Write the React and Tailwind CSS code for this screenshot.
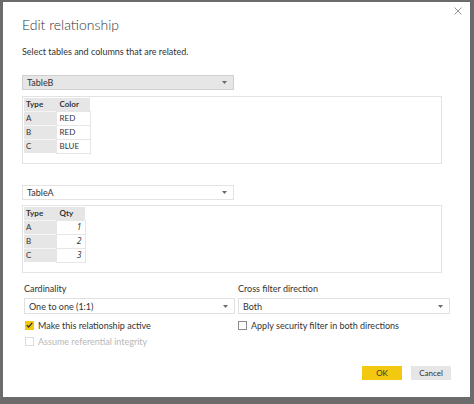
import React from "react";

const font = { fontFamily: 'Lato, "Open Sans", sans-serif' };

const Caret = () => (
    <svg width="5" height="3" viewBox="0 0 5 3" className="shrink-0">
        <path d="M0 0 L5 0 L2.5 3 Z" fill="#6a6a6a" />
    </svg>
);

const Dropdown = ({ label, className }) => (
    <div className={"flex items-center justify-between border pl-[4px] pr-[6px] text-[9px] text-[#333] " + className}>
        <span className="leading-none">{label}</span>
        <Caret />
    </div>
);

const Preview = ({ second, rows }) => (
    <div className="w-[420px] h-[68px] border border-[#e3e3e3] pl-px pt-px">
        <table className="border-collapse text-[8px] text-[#333]">
            <thead>
                <tr className="h-[13px]">
                    <th className="w-[32px] bg-[#e6e6e6] border-r border-[#e6e6e6] text-left font-bold pl-[2px]">Type</th>
                    <th className={"bg-[#e6e6e6] text-left font-bold pl-[3px] " + (second === "Qty" ? "w-[29px]" : "w-[34px]")}>{second}</th>
                </tr>
            </thead>
            <tbody>
                {rows.map((r) => (
                    <tr key={r[0]} className="h-[14px]">
                        <td className="bg-[#e6e6e6] border-t border-[#f5f5f5] pl-[2px]">{r[0]}</td>
                        <td className={"bg-white border border-[#e6e6e6] " + (second === "Qty" ? "text-right italic text-[8.5px] font-['Open_Sans'] pr-[3px]" : "pl-[3px]")}>{r[1]}</td>
                    </tr>
                ))}
            </tbody>
        </table>
    </div>
);

const Check = ({ checked, disabled, label }) => (
    <div className="flex items-center gap-[4px] h-[10px]">
        {checked ? (
            <div className="w-[9px] h-[9px] bg-[#f2c811] flex items-center justify-center">
                <svg width="7" height="6" viewBox="0 0 7 6">
                    <path d="M0.8 3.2 L2.7 5 L6.2 0.8" stroke="#333" strokeWidth="1.3" fill="none" />
                </svg>
            </div>
        ) : (
            <div className={"w-[9px] h-[9px] border " + (disabled ? "border-[#dcdcdc]" : "border-[#8a8a8a]")} />
        )}
        <span className={"text-[9px] leading-none " + (disabled ? "text-[#b8b8b8]" : "text-[#333]")}>{label}</span>
    </div>
);

export default function App() {
    return (
        <div className="w-[474px] h-[404px] bg-[#6b6b6b] pt-[2px] pl-[3px] pr-[4px] pb-[7px]" style={font}>
            <div className="relative h-full bg-white pl-[19px]">
                <button className="absolute top-[5px] right-[8px]">
                    <svg width="8" height="8" viewBox="0 0 8 8">
                        <path d="M0.5 0.5 L7.5 7.5 M7.5 0.5 L0.5 7.5" stroke="#8a8a8a" strokeWidth="0.9" />
                    </svg>
                </button>

                <h1 className="pt-[13px] text-[14px] leading-[20px] font-light text-[#333]">Edit relationship</h1>
                <p className="mt-[11px] text-[9px] leading-[12px] text-[#333]">Select tables and columns that are related.</p>

                <Dropdown label="TableB" className="mt-[17px] w-[212px] h-[15px] bg-[#e6e6e6] border-[#cfcfcf]" />
                <div className="mt-[6px]">
                    <Preview second="Color" rows={[["A", "RED"], ["B", "RED"], ["C", "BLUE"]]} />
                </div>

                <Dropdown label="TableA" className="mt-[21px] w-[212px] h-[15px] bg-white border-[#e3e3e3]" />
                <div className="mt-[5px]">
                    <Preview second="Qty" rows={[["A", "1"], ["B", "2"], ["C", "3"]]} />
                </div>

                <div className="flex gap-[3px] mt-[10px] ml-[2px]">
                    <div className="w-[211px]">
                        <div className="text-[9px] leading-[12px] text-[#333]">Cardinality</div>
                        <Dropdown label="One to one (1:1)" className="mt-[3px] w-[211px] h-[16px] bg-white border-[#e0e0e0]" />
                    </div>
                    <div className="w-[212px]">
                        <div className="text-[9px] leading-[12px] text-[#333]">Cross filter direction</div>
                        <Dropdown label="Both" className="mt-[3px] w-[212px] h-[16px] bg-white border-[#e0e0e0]" />
                    </div>
                </div>

                <div className="flex gap-[3px] mt-[6px] ml-[3px]">
                    <div className="w-[210px] flex flex-col gap-[6px]">
                        <Check checked label="Make this relationship active" />
                        <Check disabled label="Assume referential integrity" />
                    </div>
                    <div>
                        <Check label="Apply security filter in both directions" />
                    </div>
                </div>

                <div className="flex justify-end gap-[9px] pr-[19px] mt-[20px]">
                    <button className="w-[40px] h-[14px] bg-[#f2c811] text-[8px] leading-none text-[#333]">OK</button>
                    <button className="w-[40px] h-[14px] bg-[#e6e6e6] text-[8px] leading-none text-[#333]">Cancel</button>
                </div>
            </div>
        </div>
    );
}
